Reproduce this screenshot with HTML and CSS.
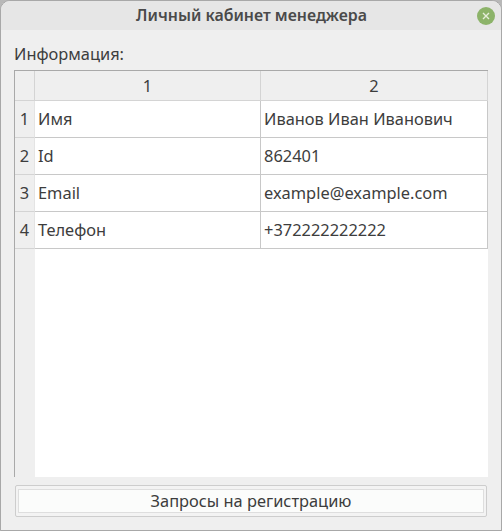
FILE: index.html
```html
<!DOCTYPE html>
<html lang="ru">
<head>
  <meta charset="UTF-8">
  <title>Личный кабинет менеджера</title>
  <link rel="stylesheet" href="styles.css">
</head>
<body>
  <div class="window">
    <div class="titlebar">
      <span class="title">Личный кабинет менеджера</span>
      <span class="close">
        <svg width="18" height="18" viewBox="0 0 18 18">
          <circle cx="9" cy="9" r="9" fill="#8cb369"/>
          <path d="M6 6l6 6M12 6l-6 6" stroke="#e6eedb" stroke-width="1.4" fill="none"/>
        </svg>
      </span>
    </div>

    <div class="content">
      <div class="label">Информация:</div>

      <div class="table">
        <div class="corner"></div>
        <div class="col-head">1</div>
        <div class="col-head">2</div>

        <div class="row-head">1</div>
        <div class="cell">Имя</div>
        <div class="cell">Иванов Иван Иванович</div>

        <div class="row-head">2</div>
        <div class="cell">Id</div>
        <div class="cell">862401</div>

        <div class="row-head">3</div>
        <div class="cell">Email</div>
        <div class="cell">example@example.com</div>

        <div class="row-head">4</div>
        <div class="cell">Телефон</div>
        <div class="cell">+372222222222</div>

        <div class="row-rest"></div>
        <div class="rest"></div>
      </div>

      <div class="button"><span class="button-inner">Запросы на регистрацию</span></div>
    </div>
  </div>
</body>
</html>
```

FILE: styles.css
```css
* {
  box-sizing: border-box;
}

html,
body {
  margin: 0;
  height: 100%;
}

body {
  background: #b8b8b8;
  font-family: "Noto Sans", "Open Sans", sans-serif;
  font-size: 16.4px;
  color: #3d3d3d;
}

.window {
  height: 531px;
  width: 502px;
  display: flex;
  flex-direction: column;
  background: #efefef;
  border: 1px solid #a8a8a8;
  border-radius: 10px 10px 0 0;
  overflow: hidden;
}

.titlebar {
  height: 29px;
  display: flex;
  align-items: center;
  justify-content: center;
  padding-left: 1px;
  padding-bottom: 1px;
  background: #e6e6e6;
  position: relative;
}

.title {
  font-weight: 600;
  font-size: 15.9px;
  color: #4a4a4a;
}

.close {
  position: absolute;
  right: 6px;
  top: 6px;
  width: 18px;
  height: 18px;
}

.close svg {
  display: block;
}

.content {
  flex: 1;
  display: flex;
  flex-direction: column;
  padding: 13px 13px 7px 13px;
}

.label {
  height: 27px;
  line-height: 21px;
}

.table {
  height: 407px;
  width: 474px;
  display: grid;
  grid-template-columns: 20px 226px 227px;
  grid-template-rows: 30px repeat(4, 37px) 1fr;
  border-top: 1px solid #a9a9a9;
  border-left: 1px solid #a9a9a9;
  background: #fff;
}

.corner,
.col-head {
  background: #efefef;
  border-bottom: 1px solid #d4d4d4;
}

.corner {
  border-right: 1px solid #d4d4d4;
}

.col-head {
  display: flex;
  align-items: center;
  justify-content: center;
  border-right: 1px solid #d4d4d4;
  padding-bottom: 1px;
}

.row-head {
  display: flex;
  align-items: center;
  justify-content: center;
  background: #efefef;
  border-bottom: 1px solid #d4d4d4;
  border-right: 1px solid #e4e4e4;
  padding-bottom: 1px;
}

.cell {
  display: flex;
  align-items: center;
  padding-left: 3px;
  padding-bottom: 1px;
  white-space: nowrap;
  background: #fff;
  border-bottom: 1px solid #c8c8c8;
  border-right: 1px solid #c8c8c8;
}

.row-rest {
  background: #efefef;
}

.rest {
  grid-column: 2 / 4;
  background: #fff;
}

.button {
  margin-top: 8px;
  margin-left: 1px;
  width: 472px;
  height: 32px;
  padding: 3px 2px;
  background: #f3f3f3;
  border: 1px solid #cdcdcd;
  border-radius: 2px;
}

.button-inner {
  display: flex;
  align-items: center;
  justify-content: center;
  height: 100%;
  background: #fbfcfb;
  border: 1px solid #dedede;
  padding-bottom: 1px;
}
```
